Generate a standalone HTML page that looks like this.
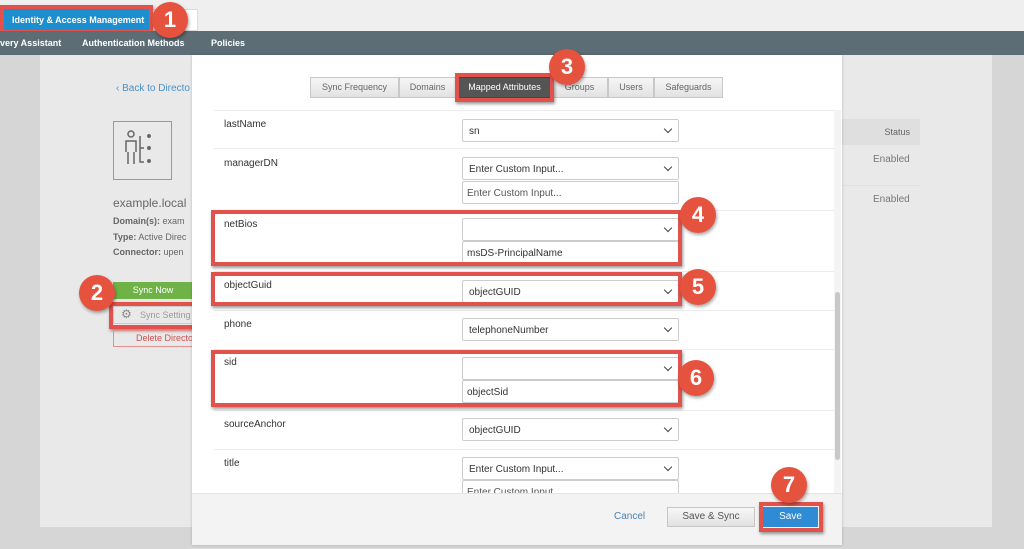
<!DOCTYPE html>
<html><head><meta charset="utf-8"><style>
*{margin:0;padding:0;box-sizing:border-box}
body{width:1024px;height:549px;overflow:hidden;position:relative;background:#d6d6d6;font-family:"Liberation Sans",Arial,sans-serif;font-size:10px;color:#333}
.a{position:absolute;white-space:nowrap}
.sel{position:absolute;left:462px;width:217px;height:23px;background:#fff;border:1px solid #ccc;border-radius:2px;padding:6px 6px;font-size:10px;color:#333}
.sel::after{content:"";position:absolute;right:7px;top:6px;width:5px;height:5px;border-right:1.6px solid #444;border-bottom:1.6px solid #444;transform:rotate(45deg)}
.inp{position:absolute;left:462px;width:217px;height:23px;background:#fff;border:1px solid #ccc;border-radius:2px;padding:6px 4px;font-size:10px;color:#333}
.lbl{position:absolute;left:224px;font-size:10px;color:#333}
.ln{position:absolute;left:214px;width:622px;height:1px;background:#ececec}
.rb{position:absolute;border:4px solid #e0524b;box-shadow:1px 2px 3px rgba(0,0,0,.4)}
.c{position:absolute;width:36px;height:36px;border-radius:50%;background:#e5533f;color:#fff;font-size:22px;font-weight:bold;text-align:center;line-height:36px;box-shadow:1px 2px 3px rgba(0,0,0,.35)}
.tab{position:absolute;top:77px;height:21px;background:linear-gradient(#f6f6f6,#e2e2e2);border:1px solid #c8c8c8;font-size:9px;color:#666;text-align:center;line-height:19px}
</style></head><body>
<div class="a" style="left:0;top:0;width:1024px;height:31px;background:#efefef"></div>
<div class="a" style="left:150px;top:9px;width:48px;height:22px;background:#fff;border:1px solid #ddd"></div>
<div class="a" style="left:4px;top:9px;width:146px;height:22px;background:#1d8fcf;color:#fff;font-weight:bold;font-size:9px;line-height:22px;padding-left:8px">Identity &amp; Access Management</div>
<div class="rb" style="left:0;top:5px;width:153px;height:29px"></div>
<div class="a" style="left:0;top:31px;width:1024px;height:24px;background:#5d6d75;color:#fff;font-weight:bold;font-size:9px;line-height:24px">
<span class="a" style="left:0">very Assistant</span><span class="a" style="left:82px">Authentication Methods</span><span class="a" style="left:211px">Policies</span></div>
<div class="a" style="left:40px;top:55px;width:952px;height:472px;background:#e9e9e9"></div>
<div class="a" style="left:116px;top:83px;color:#4a90c8;font-size:10px">‹ Back to Directo</div>
<div class="a" style="left:113px;top:121px;width:59px;height:59px;border:1px solid #999"></div>
<svg class="a" style="left:120px;top:128px" width="46" height="46" viewBox="0 0 46 46" fill="none" stroke="#666" stroke-width="1.5"><circle cx="11" cy="6" r="3"/><path d="M6 24V13h10v11M8 24v12M14 24v12M20 8v26h4M20 20h4"/><circle cx="29" cy="8" r="1.2" fill="#666"/><circle cx="29" cy="20" r="1.2" fill="#666"/><circle cx="29" cy="33" r="1.2" fill="#666"/></svg>
<div class="a" style="left:113px;top:196px;font-size:12px;color:#666">example.local</div>
<div class="a" style="left:113px;top:214px;font-size:9px;color:#666;line-height:15.5px"><b>Domain(s):</b> exam<br><b>Type:</b> Active Direc<br><b>Connector:</b> upen</div>
<div class="a" style="left:113px;top:282px;width:80px;height:17px;background:#6fb346;color:#fff;font-size:9px;text-align:center;line-height:17px">Sync Now</div>
<div class="a" style="left:113px;top:306px;width:80px;height:18px;border:1px solid #ccc;color:#999;font-size:9px;line-height:16px;padding-left:26px;overflow:hidden">Sync Setting</div>
<div class="a" style="left:121px;top:307px;color:#888;font-size:12px">⚙</div>
<div class="rb" style="left:109px;top:302px;width:88px;height:27px"></div>
<div class="a" style="left:113px;top:330px;width:80px;height:17px;border:1px solid #e09090;color:#d05050;font-size:9px;line-height:15px;padding-left:22px;overflow:hidden">Delete Directo</div>
<div class="a" style="left:842px;top:119px;width:78px;height:26px;background:#dfdfdf;font-size:9px;color:#666;text-align:right;padding:8px 10px 0 0">Status</div>
<div class="a" style="left:873px;top:154px;font-size:10px;color:#777">Enabled</div>
<div class="a" style="left:842px;top:185px;width:78px;height:1px;background:#e0e0e0"></div>
<div class="a" style="left:873px;top:194px;font-size:10px;color:#777">Enabled</div>
<div class="a" style="left:192px;top:55px;width:650px;height:490px;background:#fff;box-shadow:0 0 3px rgba(0,0,0,.2)"></div>
<div class="tab" style="left:310px;width:89px">Sync Frequency</div>
<div class="tab" style="left:399px;width:57px">Domains</div>
<div class="tab" style="left:458px;width:93px;background:#555;color:#fff;border-color:#444">Mapped Attributes</div>
<div class="tab" style="left:551px;width:57px">Groups</div>
<div class="tab" style="left:608px;width:46px">Users</div>
<div class="tab" style="left:654px;width:69px">Safeguards</div>
<div class="rb" style="left:455px;top:73px;width:99px;height:29px"></div>
<div class="ln" style="top:110px"></div>
<div class="lbl" style="top:119px">lastName</div><div class="sel" style="top:119px">sn</div>
<div class="ln" style="top:148px"></div>
<div class="lbl" style="top:158px">managerDN</div><div class="sel" style="top:157px">Enter Custom Input...</div><div class="inp" style="top:181px;color:#555">Enter Custom Input...</div>
<div class="ln" style="top:210px"></div>
<div class="lbl" style="top:219px">netBios</div><div class="sel" style="top:218px"></div><div class="inp" style="top:241px">msDS-PrincipalName</div>
<div class="ln" style="top:271px"></div>
<div class="lbl" style="top:280px">objectGuid</div><div class="sel" style="top:280px">objectGUID</div>
<div class="ln" style="top:310px"></div>
<div class="lbl" style="top:319px">phone</div><div class="sel" style="top:318px">telephoneNumber</div>
<div class="ln" style="top:349px"></div>
<div class="lbl" style="top:357px">sid</div><div class="sel" style="top:357px"></div><div class="inp" style="top:380px">objectSid</div>
<div class="ln" style="top:410px"></div>
<div class="lbl" style="top:419px">sourceAnchor</div><div class="sel" style="top:418px">objectGUID</div>
<div class="ln" style="top:449px"></div>
<div class="lbl" style="top:458px">title</div><div class="sel" style="top:457px">Enter Custom Input...</div><div class="inp" style="top:480px;color:#555">Enter Custom Input...</div>
<div class="rb" style="left:211px;top:210px;width:471px;height:56px"></div>
<div class="rb" style="left:211px;top:272px;width:471px;height:34px"></div>
<div class="rb" style="left:211px;top:350px;width:471px;height:57px"></div>
<div class="a" style="left:834px;top:110px;width:7px;height:383px;background:#f4f4f4"></div>
<div class="a" style="left:835px;top:292px;width:5px;height:168px;background:#c8c8c8;border-radius:3px"></div>
<div class="a" style="left:192px;top:493px;width:650px;height:52px;background:#f3f3f3;border-top:1px solid #e4e4e4"></div>
<div class="a" style="left:614px;top:511px;color:#4a7fb5;font-size:10px">Cancel</div>
<div class="a" style="left:667px;top:507px;width:88px;height:20px;background:linear-gradient(#f7f7f7,#e2e2e2);border:1px solid #c6c6c6;font-size:10px;color:#555;text-align:center;line-height:18px">Save &amp; Sync</div>
<div class="a" style="left:763px;top:507px;width:55px;height:20px;background:#2f8bd3;color:#fff;font-size:10px;text-align:center;line-height:20px">Save</div>
<div class="rb" style="left:759px;top:502px;width:64px;height:30px"></div>
<div class="c" style="left:152px;top:2px">1</div>
<div class="c" style="left:79px;top:275px">2</div>
<div class="c" style="left:549px;top:49px">3</div>
<div class="c" style="left:680px;top:197px">4</div>
<div class="c" style="left:680px;top:269px">5</div>
<div class="c" style="left:678px;top:360px">6</div>
<div class="c" style="left:771px;top:467px">7</div>
</body></html>
